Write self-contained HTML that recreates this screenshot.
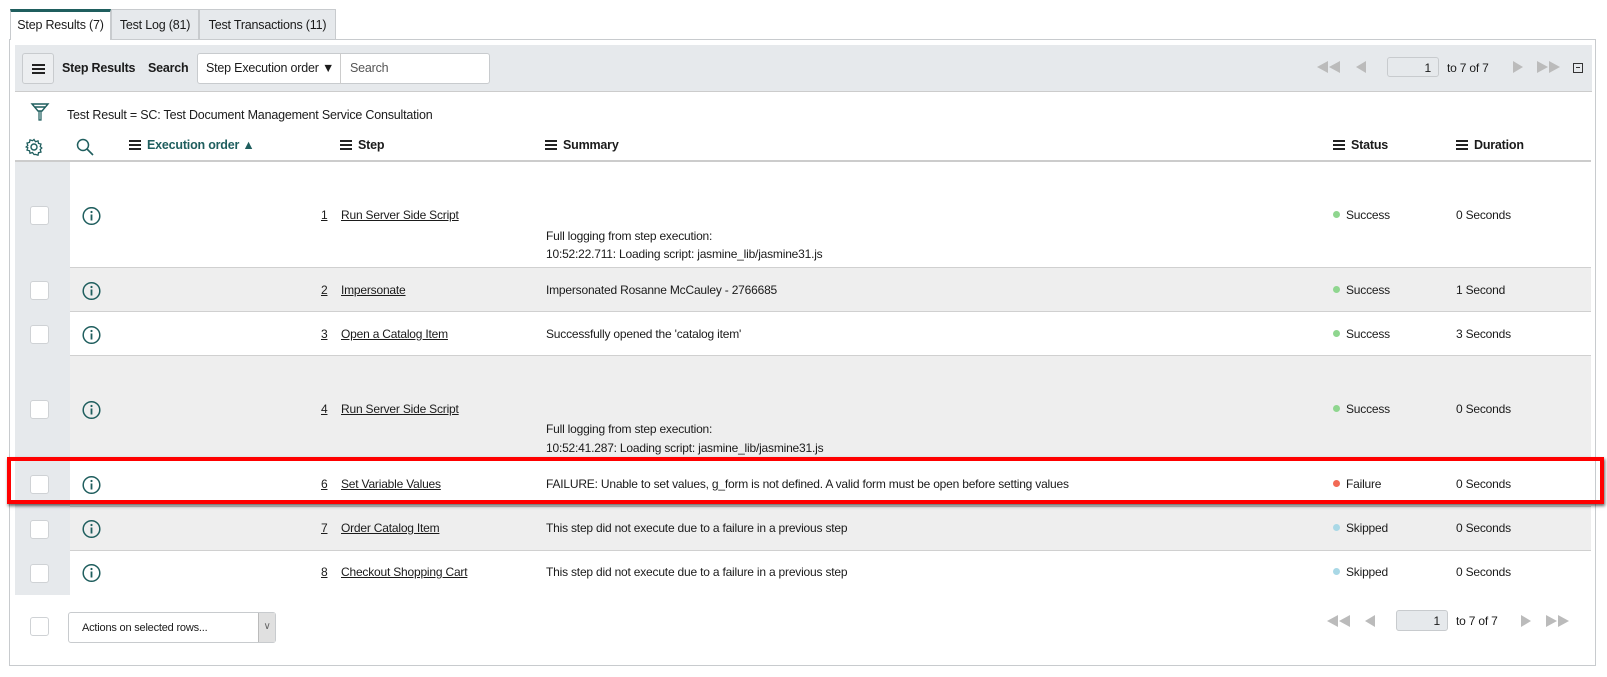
<!DOCTYPE html>
<html><head><meta charset="utf-8"><style>
*{box-sizing:border-box;margin:0;padding:0}
body{width:1607px;height:677px;background:#fff;font-family:"Liberation Sans",sans-serif;font-size:12px;color:#1b1b1b;position:relative;overflow:hidden;letter-spacing:-0.2px}
.a{position:absolute;white-space:nowrap}
.tab{position:absolute;top:9px;height:30px;border:1px solid #c8cbce;border-bottom:none;background:#e6e9ec;font-size:12.5px;padding:8px 0 0;text-align:center}
.panel{position:absolute;left:9px;top:39px;width:1587px;height:627px;border:1px solid #c8cbce}
.row{position:absolute;left:15px;width:1576px;border-bottom:1px solid #d0d0d0}
.cb{position:absolute;left:30px;width:19px;height:19px;border:1px solid #cfd2d5;border-radius:3px;background:#fff}
.lcol{position:absolute;left:15px;width:55px;background:#e6e9ec}
u{text-decoration:underline}
.dot{display:inline-block;width:7px;height:7px;border-radius:50%;margin-right:6px;vertical-align:1px}
.ham{display:inline-block;width:12px;height:10px;border-top:2px solid #222;border-bottom:2px solid #222;position:relative;vertical-align:-1px;margin-right:6px}
.ham:after{content:"";position:absolute;left:0;right:0;top:2px;border-top:2px solid #222}
.hd{font-weight:bold;top:138px;font-size:12.5px}
</style></head><body>
<div class="tab" style="left:10px;width:101px;background:#fff;border-top:3px solid #1f5e5e;padding-top:6px;height:31px;z-index:2">Step Results (7)</div>
<div class="tab" style="left:111px;width:88px">Test Log (81)</div>
<div class="tab" style="left:199px;width:137px">Test Transactions (11)</div>
<div class="panel"></div>
<div class="a" style="left:15px;top:45px;width:1577px;height:47px;background:#e6e9ec;border-bottom:1px solid #ccc"></div>
<div class="a" style="left:22px;top:53px;width:32px;height:31px;border:1px solid #c8cbce;border-radius:3px;background:#eceef0"><span class="ham" style="position:absolute;left:9px;top:10px;width:13px"></span></div>
<div class="a" style="left:62px;top:61px;font-weight:bold;font-size:12.5px">Step Results</div>
<div class="a" style="left:148px;top:61px;font-weight:bold;font-size:12.5px">Search</div>
<div class="a" style="left:197px;top:53px;width:293px;height:31px;border:1px solid #c8cbce;border-radius:3px;background:#fff"></div>
<div class="a" style="left:340px;top:53px;width:1px;height:31px;background:#ccc"></div>
<div class="a" style="left:206px;top:61px;font-size:12.5px">Step Execution order ▼</div>
<div class="a" style="left:350px;top:61px;font-size:12.5px;color:#555">Search</div>
<svg class="a" style="left:1316px;top:60px" width="248" height="14" viewBox="0 0 248 14" fill="#bbb"><path d="M1 7L12 1V13Z M13 7L24 1V13Z M40 7L50 1V13Z M197 1L207 7L197 13Z M221 1L232 7L221 13Z M233 1L244 7L233 13Z"/></svg>
<div class="a" style="left:1387px;top:57px;width:52px;height:20px;border:1px solid #c8cbce;border-radius:3px;background:#e6e9ec;text-align:right;padding:3px 7px 0 0">1</div>
<div class="a" style="left:1447px;top:61px">to 7 of 7</div>
<div class="a" style="left:1573px;top:63px;width:10px;height:10px;border:1px solid #333"><div style="position:absolute;left:2px;top:3px;width:4px;border-top:1px solid #333"></div></div>
<svg class="a" style="left:30px;top:102px" width="20" height="22" viewBox="0 0 20 22"><path d="M2 2H18L12 9H8Z M5 5H15" fill="none" stroke="#1f5e5e" stroke-width="1.4"/><path d="M9 9V18H11V9" fill="none" stroke="#1f5e5e" stroke-width="1.2"/></svg>
<div class="a" style="left:67px;top:108px;font-size:12.5px">Test Result = SC: Test Document Management Service Consultation</div>
<svg class="a" style="left:25px;top:138px" width="18" height="18" viewBox="0 0 18 18"><circle cx="9" cy="9" r="3" fill="none" stroke="#1f5e5e" stroke-width="1.4"/><path d="M9 1.5l1.5 2.2 2.5-.8.5 2.5 2.5.7-.8 2.5 1.6 1.4-1.6 1.6.8 2.4-2.5.7-.5 2.5-2.5-.8L9 16.5l-1.5-2-2.5.8-.5-2.5-2.5-.7.8-2.4L1.2 9l1.6-1.4-.8-2.5 2.5-.7.5-2.5 2.5.8z" fill="none" stroke="#1f5e5e" stroke-width="1.3"/></svg>
<svg class="a" style="left:76px;top:138px" width="18" height="18" viewBox="0 0 18 18"><circle cx="7" cy="7" r="5.5" fill="none" stroke="#1f5e5e" stroke-width="1.5"/><path d="M11 11L17 17" stroke="#1f5e5e" stroke-width="1.6"/></svg>
<div class="a hd" style="left:129px;color:#1f5e5e"><span class="ham"></span>Execution order ▲</div>
<div class="a hd" style="left:340px"><span class="ham"></span>Step</div>
<div class="a hd" style="left:545px"><span class="ham"></span>Summary</div>
<div class="a hd" style="left:1333px"><span class="ham"></span>Status</div>
<div class="a hd" style="left:1456px"><span class="ham"></span>Duration</div>
<div class="a" style="left:15px;top:160px;width:1576px;height:2px;background:#ccc"></div>

<div class="row" style="top:162px;height:106px;background:#fff"></div>
<div class="row" style="top:268px;height:44px;background:#eeeeee"></div>
<div class="row" style="top:312px;height:44px;background:#fff"></div>
<div class="row" style="top:356px;height:103px;background:#eeeeee"></div>
<div class="row" style="top:459px;height:48px;background:#fff"></div>
<div class="row" style="top:507px;height:44px;background:#eeeeee"></div>
<div class="row" style="top:551px;height:44px;background:#fff;border:none"></div>
<div class="lcol" style="top:162px;height:433px"></div>

<div class="cb" style="top:206px"></div><div class="cb" style="top:281px"></div><div class="cb" style="top:325px"></div><div class="cb" style="top:400px"></div><div class="cb" style="top:475px"></div><div class="cb" style="top:520px"></div><div class="cb" style="top:564px"></div>
<svg class="a" style="left:82px;top:207px" width="19" height="400" viewBox="0 0 19 400">
<g fill="none" stroke="#1f5e5e" stroke-width="1.5">
<circle cx="9.5" cy="9" r="8.3"/><circle cx="9.5" cy="84" r="8.3"/><circle cx="9.5" cy="128" r="8.3"/><circle cx="9.5" cy="203" r="8.3"/><circle cx="9.5" cy="278" r="8.3"/><circle cx="9.5" cy="322" r="8.3"/><circle cx="9.5" cy="366" r="8.3"/>
<path d="M9.5 7.5v6M9.5 82.5v6M9.5 126.5v6M9.5 201.5v6M9.5 276.5v6M9.5 320.5v6M9.5 364.5v6" stroke-width="1.8"/></g>
<g fill="#1f5e5e"><circle cx="9.5" cy="5" r="1.1"/><circle cx="9.5" cy="80" r="1.1"/><circle cx="9.5" cy="124" r="1.1"/><circle cx="9.5" cy="199" r="1.1"/><circle cx="9.5" cy="274" r="1.1"/><circle cx="9.5" cy="318" r="1.1"/><circle cx="9.5" cy="362" r="1.1"/></g></svg>

<div class="a" style="left:321px;top:208px"><u>1</u></div><div class="a" style="left:341px;top:208px"><u>Run Server Side Script</u></div>
<div class="a" style="left:546px;top:227px;line-height:18px">Full logging from step execution:<br>10:52:22.711: Loading script: jasmine_lib/jasmine31.js</div>
<div class="a" style="left:1333px;top:208px"><span class="dot" style="background:#8fd68f"></span>Success</div><div class="a" style="left:1456px;top:208px">0 Seconds</div>

<div class="a" style="left:321px;top:283px"><u>2</u></div><div class="a" style="left:341px;top:283px"><u>Impersonate</u></div>
<div class="a" style="left:546px;top:283px">Impersonated Rosanne McCauley - 2766685</div>
<div class="a" style="left:1333px;top:283px"><span class="dot" style="background:#8fd68f"></span>Success</div><div class="a" style="left:1456px;top:283px">1 Second</div>

<div class="a" style="left:321px;top:327px"><u>3</u></div><div class="a" style="left:341px;top:327px"><u>Open a Catalog Item</u></div>
<div class="a" style="left:546px;top:327px">Successfully opened the 'catalog item'</div>
<div class="a" style="left:1333px;top:327px"><span class="dot" style="background:#8fd68f"></span>Success</div><div class="a" style="left:1456px;top:327px">3 Seconds</div>

<div class="a" style="left:321px;top:402px"><u>4</u></div><div class="a" style="left:341px;top:402px"><u>Run Server Side Script</u></div>
<div class="a" style="left:546px;top:420px;line-height:19px">Full logging from step execution:<br>10:52:41.287: Loading script: jasmine_lib/jasmine31.js</div>
<div class="a" style="left:1333px;top:402px"><span class="dot" style="background:#8fd68f"></span>Success</div><div class="a" style="left:1456px;top:402px">0 Seconds</div>

<div class="a" style="left:321px;top:477px"><u>6</u></div><div class="a" style="left:341px;top:477px"><u>Set Variable Values</u></div>
<div class="a" style="left:546px;top:477px">FAILURE: Unable to set values, g_form is not defined. A valid form must be open before setting values</div>
<div class="a" style="left:1333px;top:477px"><span class="dot" style="background:#f26a55"></span>Failure</div><div class="a" style="left:1456px;top:477px">0 Seconds</div>

<div class="a" style="left:321px;top:521px"><u>7</u></div><div class="a" style="left:341px;top:521px"><u>Order Catalog Item</u></div>
<div class="a" style="left:546px;top:521px">This step did not execute due to a failure in a previous step</div>
<div class="a" style="left:1333px;top:521px"><span class="dot" style="background:#a9d8e6"></span>Skipped</div><div class="a" style="left:1456px;top:521px">0 Seconds</div>

<div class="a" style="left:321px;top:565px"><u>8</u></div><div class="a" style="left:341px;top:565px"><u>Checkout Shopping Cart</u></div>
<div class="a" style="left:546px;top:565px">This step did not execute due to a failure in a previous step</div>
<div class="a" style="left:1333px;top:565px"><span class="dot" style="background:#a9d8e6"></span>Skipped</div><div class="a" style="left:1456px;top:565px">0 Seconds</div>

<div class="a" style="left:7px;top:457px;width:1597px;height:47px;border:4px solid #f00;box-shadow:1px 2px 3px rgba(0,0,0,.6)"></div>

<div class="cb" style="top:617px"></div>
<div class="a" style="left:68px;top:612px;width:208px;height:31px;border:1px solid #c8cbce;border-radius:3px;background:#fff"></div>
<div class="a" style="left:258px;top:613px;width:17px;height:29px;background:#e0e0e0;border-left:1px solid #bbb;text-align:center;font-size:10px;color:#666;padding-top:8px">∨</div>
<div class="a" style="left:82px;top:622px;font-size:11px">Actions on selected rows...</div>
<svg class="a" style="left:1326px;top:614px" width="248" height="14" viewBox="0 0 248 14" fill="#bbb"><path d="M1 7L12 1V13Z M13 7L24 1V13Z M39 7L49 1V13Z M195 1L205 7L195 13Z M220 1L231 7L220 13Z M232 1L243 7L232 13Z"/></svg>
<div class="a" style="left:1396px;top:610px;width:52px;height:21px;border:1px solid #c8cbce;border-radius:3px;background:#e6e9ec;text-align:right;padding:3px 7px 0 0">1</div>
<div class="a" style="left:1456px;top:614px">to 7 of 7</div>
</body></html>
